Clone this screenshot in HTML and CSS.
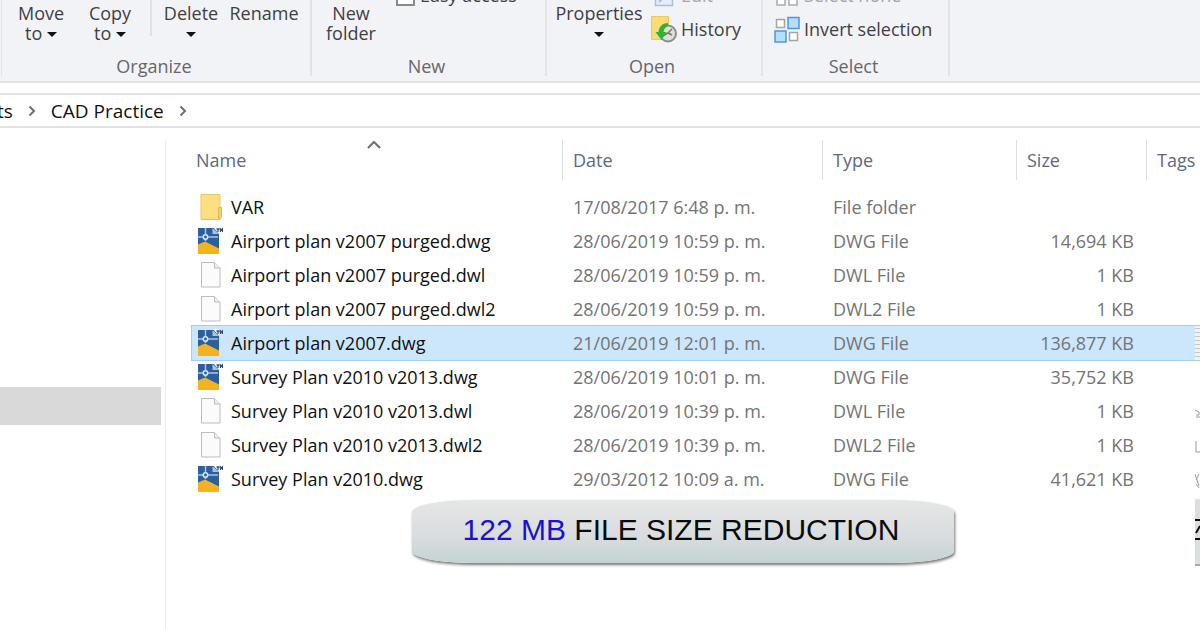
FILE: index.html
```html
<!DOCTYPE html>
<html lang="en">
<head>
<meta charset="utf-8">
<title>CAD Practice</title>
<link rel="stylesheet" href="styles.css">
</head>
<body>
<svg class="defs" aria-hidden="true">
  <symbol id="folder" viewBox="0 0 26 28">
    <path d="M4 1.500h19v25H4z" fill="#fbdf82" stroke="#e9c761"/>
    <path d="M21.500 14.500h3v9.500l-3 3z" fill="#f3cf68" stroke="#dfb955"/>
    <path d="M4 26.500h18" stroke="#e5c05a"/>
  </symbol>
  <symbol id="dwg" viewBox="0 0 26 28">
    <path d="M1 1h21v26H1z" fill="#2c5f9b"/>
    <path d="M1 17.500 8 14.500 22 21.500V27H1z" fill="#f3b321"/>
    <path d="M1 10h20M8.500 1v13" stroke="#a9c6e4" stroke-width="1.500"/>
    <circle cx="8.500" cy="10" r="2.200" fill="#2c5f9b" stroke="#d8e7f5" stroke-width="1.500"/>
    <path d="M16 0h6v7z" fill="#fff"/>
    <path d="M15.500 1v6H22z" fill="#a8c4e2"/>
    <path d="M19.500 2h3M21 2v3M23.500 5V2l1 1 1-1v3" fill="none" stroke="#2f4f7c" stroke-width="1.300"/>
  </symbol>
  <symbol id="page" viewBox="0 0 26 28">
    <path d="M4.500 1.500h13l5.500 5.500v19H4.500z" fill="#fbfbfb" stroke="#bdbdbd"/>
    <path d="M17.500 1.500V7H23" fill="#eee" stroke="#bdbdbd"/>
  </symbol>
</svg>

<header class="ribbon">
  <section class="group organize">
    <div class="tools">
      <button class="big move">Move<span>to <i class="caret"></i></span></button>
      <button class="big copy">Copy<span>to <i class="caret"></i></span></button>
      <span class="rule"></span>
      <button class="big delete">Delete<span><i class="caret"></i></span></button>
      <button class="big rename">Rename<span></span></button>
    </div>
    <h2>Organize</h2>
  </section>
  <section class="group new">
    <div class="tools">
      <button class="big folder">New<span>folder</span></button>
      <div class="stack">
        <button class="small easy"><svg width="20" height="26" viewBox="0 0 20 26"><path d="M1 1h17v22H1z" fill="#fff" stroke="#8a8a8a" stroke-width="2"/></svg>Easy access</button>
        <span class="small"></span>
      </div>
    </div>
    <h2>New</h2>
  </section>
  <section class="group open">
    <div class="tools">
      <button class="big">Properties<span><i class="caret"></i></span></button>
      <div class="stack">
        <button class="small faded"><svg width="26" height="26" viewBox="0 0 26 26"><path d="M4.500 1.500h17v22h-17z" fill="#e4edf8" stroke="#a9bddd" stroke-width="1.500"/><path d="M8 20 19 9" stroke="#a9bddd" stroke-width="2"/></svg>Edit</button>
        <button class="small"><svg width="26" height="28" viewBox="0 0 26 28"><path d="M0.500 1.500h17v23h-17z" fill="#f8dc7a" stroke="#ecc75c"/><circle cx="17" cy="18.500" r="8" fill="#dedede" stroke="#8d8d8d" stroke-width="2"/><path d="M12 21l5-3 4-4M17 18l4 2" fill="none" stroke="#777" stroke-width="1.500"/><path d="M17 8C11 8 8 12 7.500 17H4.500l6 8 5-8h-3c.5-3 2-5 4.500-6z" fill="#35b234"/></svg>History</button>
      </div>
    </div>
    <h2>Open</h2>
  </section>
  <section class="group select">
    <div class="tools">
      <div class="stack">
        <button class="small faded"><svg width="26" height="28" viewBox="0 0 26 28"><path d="M3 3h8v8H3zM15 3h8v8h-8zM3 16h8v8H3zM15 16h8v8h-8z" fill="#fff" stroke="#aaa" stroke-width="1.500"/></svg>Select none</button>
        <button class="small"><svg width="26" height="28" viewBox="0 0 26 28"><path d="M2.500 4.500h8v8h-8zM15.500 17.500h8v8h-8z" fill="#fff" stroke="#a5a5a5" stroke-width="1.500"/><path d="M14 2.500h11v11H14zM1 16h11v11H1z" fill="#b5defa" stroke="#4c9bd8" stroke-width="1.500"/></svg>Invert selection</button>
      </div>
    </div>
    <h2>Select</h2>
  </section>
</header>

<nav class="address" aria-label="Location">
  <a href="#">ts</a>
  <svg width="8" height="12" viewBox="0 0 8 12"><path d="M1.500 1.500 6 6l-4.500 4.500"/></svg>
  <a href="#">CAD Practice</a>
  <svg width="8" height="12" viewBox="0 0 8 12"><path d="M1.500 1.500 6 6l-4.500 4.500"/></svg>
</nav>

<div class="body">
  <aside class="tree"><div class="current"></div></aside>
  <main>
    <table>
      <colgroup><col class="c-name"><col class="c-date"><col class="c-type"><col class="c-size"><col></colgroup>
      <thead>
        <tr><th><div>Name<svg class="sort" width="16" height="10" viewBox="0 0 16 10"><path d="M2 8l6-6 6 6"/></svg></div></th><th><div>Date</div></th><th><div>Type</div></th><th><div>Size</div></th><th><div>Tags</div></th></tr>
      </thead>
      <tbody>
        <tr><td><div class="file"><svg><use href="#folder"/></svg>VAR</div></td><td>17/08/2017 6:48 p. m.</td><td>File folder</td><td></td><td></td></tr>
        <tr><td><div class="file"><svg><use href="#dwg"/></svg>Airport plan v2007 purged.dwg</div></td><td>28/06/2019 10:59 p. m.</td><td>DWG File</td><td>14,694 KB</td><td></td></tr>
        <tr><td><div class="file"><svg><use href="#page"/></svg>Airport plan v2007 purged.dwl</div></td><td>28/06/2019 10:59 p. m.</td><td>DWL File</td><td>1 KB</td><td></td></tr>
        <tr><td><div class="file"><svg><use href="#page"/></svg>Airport plan v2007 purged.dwl2</div></td><td>28/06/2019 10:59 p. m.</td><td>DWL2 File</td><td>1 KB</td><td></td></tr>
        <tr class="selected"><td><div class="file"><svg><use href="#dwg"/></svg>Airport plan v2007.dwg</div></td><td>21/06/2019 12:01 p. m.</td><td>DWG File</td><td>136,877 KB</td><td></td></tr>
        <tr><td><div class="file"><svg><use href="#dwg"/></svg>Survey Plan v2010 v2013.dwg</div></td><td>28/06/2019 10:01 p. m.</td><td>DWG File</td><td>35,752 KB</td><td></td></tr>
        <tr><td><div class="file"><svg><use href="#page"/></svg>Survey Plan v2010 v2013.dwl</div></td><td>28/06/2019 10:39 p. m.</td><td>DWL File</td><td>1 KB</td><td></td></tr>
        <tr><td><div class="file"><svg><use href="#page"/></svg>Survey Plan v2010 v2013.dwl2</div></td><td>28/06/2019 10:39 p. m.</td><td>DWL2 File</td><td>1 KB</td><td></td></tr>
        <tr><td><div class="file"><svg><use href="#dwg"/></svg>Survey Plan v2010.dwg</div></td><td>29/03/2012 10:09 a. m.</td><td>DWG File</td><td>41,621 KB</td><td></td></tr>
      </tbody>
    </table>
    <svg class="edge" width="5" height="250" viewBox="0 0 5 250" aria-hidden="true">
      <path d="M0 0h5v36H0z" fill="#f4f2ee"/>
      <path d="M0 2.500h5M0 6.500h5M0 10.500h5M0 14.500h5M0 18.500h5M0 22.500h5M0 26.500h5M0 30.500h5M0 34.500h5" stroke="#c9c5c0"/>
      <path d="M0 84l4 2v3H1M1 91h4M1 115v11h4M0 148l4 12M4 148l-3 6M1 158l3 4" fill="none" stroke="#999"/>
      <path d="M0 173h5v67H0z" fill="#dcdfdf"/>
      <path d="M0 238h5v2H0z" fill="#aaa"/>
      <path d="M0 194h5M5 200l-4 7M0 213h5" stroke="#111" stroke-width="2"/>
    </svg>
    <p class="callout"><span><b>122 MB</b> FILE SIZE REDUCTION</span></p>
  </main>
</div>
</body>
</html>
```
FILE: styles.css
```css
* { box-sizing: border-box; }

body {
  margin: 0;
  min-height: 100vh;
  display: flex;
  flex-direction: column;
  overflow: hidden;
  background: #fff;
  color: #111;
  font: 18px/20px "Open Sans", "Noto Sans", sans-serif;
}

.defs { display: none; }

button {
  padding: 0;
  border: 0;
  background: none;
  color: #404044;
  font: inherit;
}

/* Ribbon */
.ribbon {
  display: flex;
  align-items: flex-end;
  height: 83px;
  padding-left: 1px;
  overflow: hidden;
  background: #f2f3f7;
  border-bottom: 2px solid #e2e3e5;
}

.group {
  flex: none;
  margin-bottom: 5px;
  border-right: 2px solid #e2e3e7;
}

.organize { width: 311px; border-left: 1px solid #e2e3e7; }
.new { width: 235px; }
.open { width: 216px; }
.select { width: 187px; }

.group h2 {
  margin: 0;
  padding: 10px 4px 0 0;
  font-size: 18px;
  font-weight: 400;
  line-height: 20px;
  text-align: center;
  color: #66666b;
}

.tools {
  display: flex;
  align-items: flex-end;
  height: 68px;
}

.big {
  display: flex;
  flex-direction: column;
  align-items: center;
  margin-bottom: 3px;
}

.big span { height: 20px; white-space: nowrap; }

.move { width: 78px; }
.copy { width: 60px; }
.delete { width: 78px; }
.rename { width: 68px; }
.folder { width: 78px; }
.open .big { width: 104px; }

.rule {
  width: 2px;
  height: 68px;
  margin: 0 0 10px 10px;
  background: #e0e1e5;
}

.caret {
  display: inline-block;
  vertical-align: middle;
  margin-bottom: 2px;
  border: 5px solid transparent;
  border-top-color: #111;
  border-bottom: 0;
}

.stack { display: flex; flex-direction: column; }

.small {
  display: flex;
  align-items: center;
  gap: 4px;
  height: 34px;
  white-space: nowrap;
}

.select .stack { padding-left: 11px; }
.easy { padding-left: 6px; }
.faded { color: #a5a5aa; }

/* Address bar */
.address {
  display: flex;
  align-items: center;
  gap: 15px;
  height: 35px;
  margin-top: 10px;
  margin-left: -3px;
  border: 2px solid #e2e2e2;
  border-width: 2px 0;
  font-size: 19px;
}

.address a { color: #111; text-decoration: none; }
.address svg, .sort { fill: none; stroke: #6f6f6f; stroke-width: 2; }

/* Content */
.body { flex: 1; display: flex; }

.tree {
  flex: none;
  width: 166px;
  margin-top: 12px;
  padding: 247px 4px 0 0;
  border-right: 1px solid #ececec;
}

.current { height: 38px; background: #d9d9d9; }

main {
  position: relative;
  flex: 1;
  min-width: 0;
  padding: 12px 0 0 26px;
}

table {
  width: 100%;
  table-layout: fixed;
  border-collapse: collapse;
}

.c-name { width: 370px; }
.c-date { width: 260px; }
.c-type { width: 194px; }
.c-size { width: 130px; }

th { padding: 0 0 10px; text-align: left; font-weight: 400; color: #5c6980; }

th div {
  position: relative;
  height: 40px;
  padding-left: 10px;
  line-height: 40px;
  border-left: 1px solid #dedede;
}

th:first-child div { padding-left: 4px; border-left: 0; }

.sort { position: absolute; top: 0; left: 47%; }

td {
  height: 34px;
  padding: 0 0 0 11px;
  white-space: nowrap;
  color: #747474;
}

td:first-child { padding-left: 5px; color: #111; }
td:nth-child(4) { padding: 0 12px 0 0; text-align: right; }

.file { display: flex; align-items: center; gap: 8px; }

.file svg {
  width: 26px;
  height: 28px;
}

.selected { background: #cce6fc; outline: 1px solid #9fd0f4; }

/* Strip of the neighbouring window */
.edge { position: absolute; top: 198px; right: 0; background: #fff; }

.callout {
  position: absolute;
  top: 372px;
  left: 246px;
  width: 542px;
  margin: 0;
  padding: 13px 4px 16px 0;
  border-radius: 60px / 12px;
  background: linear-gradient(#e5e7e6, #dadddf 55%, #c5d3d3);
  box-shadow: 1px 2px 3px #777;
  color: #0a0a0a;
  font: 30px/34px "Liberation Sans", sans-serif;
  text-align: center;
}

.callout b { font-weight: 400; color: #1c12cc; }
```
